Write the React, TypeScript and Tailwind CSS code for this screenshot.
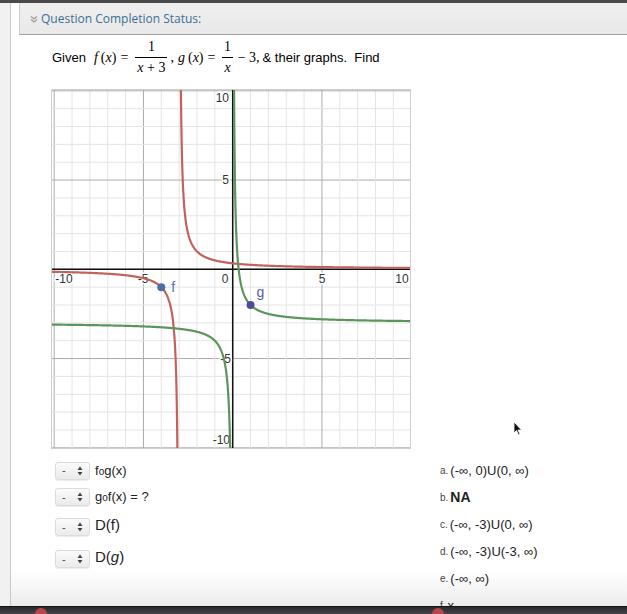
import React from 'react'

const S = 17.85
const CX = 180.7
const CY = 179.3
const px = (x: number) => CX + x * S
const py = (y: number) => CY - y * S

function curve(fn: (x: number) => number, a: number, b: number) {
  const pts: string[] = []
  const n = 1500
  for (let i = 0; i <= n; i++) {
    const x = a + ((b - a) * i) / n
    let y = fn(x)
    if (y > 12) y = 12
    if (y < -12) y = -12
    pts.push(`${px(x).toFixed(2)},${py(y).toFixed(2)}`)
  }
  return 'M' + pts.join('L')
}

function Graph() {
  const ticks: number[] = []
  for (let i = -10; i <= 10; i++) ticks.push(i)
  const f = (x: number) => 1 / (x + 3)
  const g = (x: number) => 1 / x - 3
  return (
    <svg width="360" height="360" className="block border border-[#cfcfcf] bg-white">
      <defs>
        <clipPath id="box">
          <rect x="0" y="0" width="360" height="360" />
        </clipPath>
      </defs>
      {ticks.map((i) => (
        <g key={i}>
          <line x1={px(i)} x2={px(i)} y1="0" y2="360" stroke={i % 5 === 0 ? '#ababab' : '#e4e4e4'} strokeWidth="1" />
          <line y1={py(i)} y2={py(i)} x1="0" x2="360" stroke={i % 5 === 0 ? '#ababab' : '#e4e4e4'} strokeWidth="1" />
        </g>
      ))}
      <line x1={px(0)} x2={px(0)} y1="0" y2="360" stroke="#111" strokeWidth="1.5" />
      <line y1={py(0)} y2={py(0)} x1="0" x2="360" stroke="#111" strokeWidth="1.5" />
      <g
        fontFamily="'Liberation Sans', Arial, sans-serif"
        fontSize="12"
        fill="#333"
        stroke="#fff"
        strokeWidth="3"
        paintOrder="stroke"
      >
        <text x="12" y="193" textAnchor="middle">-10</text>
        <text x="91" y="193" textAnchor="middle">-5</text>
        <text x="173" y="193" textAnchor="middle">0</text>
        <text x="270" y="193" textAnchor="middle">5</text>
        <text x="350" y="193" textAnchor="middle">10</text>
        <text x="177" y="12" textAnchor="end">10</text>
        <text x="177" y="94" textAnchor="end">5</text>
        <text x="179" y="273" textAnchor="end">-5</text>
        <text x="178" y="354" textAnchor="end">-10</text>
      </g>
      <g clipPath="url(#box)" fill="none" strokeWidth="2.2" strokeLinejoin="round">
        <path d={curve(f, -10.3, -3.0005)} stroke="#c0635c" />
        <path d={curve(f, -2.9995, 10.3)} stroke="#c0635c" />
        <path d={curve(g, -10.3, -0.0005)} stroke="#5b955c" />
        <path d={curve(g, 0.0005, 10.3)} stroke="#5b955c" />
      </g>
      <circle cx={px(-4)} cy={py(-1)} r="4" fill="#4d6fa6" />
      <circle cx={px(1)} cy={py(-2)} r="4" fill="#4c4b97" />
      <text x={px(-4) + 10} y={py(-1) + 5} fontSize="14" fill="#5a70a8" fontFamily="'Liberation Sans', Arial, sans-serif">f</text>
      <text x={px(1) + 6} y={py(-2) - 8} fontSize="14" fill="#5b5ba0" fontFamily="'Liberation Sans', Arial, sans-serif">g</text>
    </svg>
  )
}

function Frac({ top, bottom }: { top: React.ReactNode; bottom: React.ReactNode }) {
  return (
    <span className="inline-flex flex-col items-center mx-[3px] leading-[20px]">
      <span className="px-[1px]">{top}</span>
      <span className="border-t border-black px-[2px] leading-[20px]">{bottom}</span>
    </span>
  )
}

function Select() {
  return (
    <div className="w-[35px] h-[18px] rounded-[3px] border border-[#dcdcdc] bg-gradient-to-b from-[#fbfbfb] to-[#ebebeb] shadow-[0_1px_1px_rgba(0,0,0,0.08)] flex items-center justify-between px-[6px] text-[11px] text-[#444]">
      <span>-</span>
      <svg width="6" height="10" viewBox="0 0 6 10">
        <path d="M3 0.5 L5.5 4 L0.5 4 Z M3 9.5 L5.5 6 L0.5 6 Z" fill="#444" />
      </svg>
    </div>
  )
}

const sans = "font-['Liberation_Sans',Arial,sans-serif]"

export default function App() {
  const rows: [React.ReactNode, string][] = [
    [<span className="text-[13px]">f<span className="text-[10px]">o</span>g(x)</span>, 'h-[17px]'],
    [<span className="text-[13px]">g<span className="text-[10px]">o</span>f(x) = ?</span>, 'h-[27px]'],
    [<span className="text-[15px]">D(f)</span>, 'h-[30px]'],
    [<span className="text-[15px]">D(<i>g</i>)</span>, 'h-[32px]'],
  ]
  const answers: [string, React.ReactNode][] = [
    ['a.', '(-∞, 0)U(0, ∞)'],
    ['b.', <span className="font-bold text-[14px]">NA</span>],
    ['c.', '(-∞, -3)U(0, ∞)'],
    ['d.', '(-∞, -3)U(-3, ∞)'],
    ['e.', '(-∞, ∞)'],
    ['f.', 'x'],
  ]
  return (
    <div className={`relative w-[627px] h-[614px] overflow-hidden bg-white ${sans} text-[#1a1a1a]`}>
      <div className="h-[3px] bg-[#4a4a4a]" />
      <div className="flex h-[603px]">
        <div className="w-[11px] bg-[#f1f1f1] border-r border-[#c8c8c8]" />
        <div className="flex-1 pl-[8px] bg-gradient-to-b from-white from-[94%] to-[#ececec]">
          <div className="h-[32px] bg-gradient-to-b from-[#efefef] to-[#e9e9e9] border-l border-b border-l-[#cccccc] border-b-[#9f9f9f] flex items-center pl-[10px] font-['Open_Sans',sans-serif] text-[12px] text-[#3a6f95]">
            <svg width="8" height="8" viewBox="0 0 8 8" className="mr-[3px] mt-[1px]">
              <path d="M1 1.5 L4 4 L7 1.5 M1 4.5 L4 7 L7 4.5" stroke="#9a9a9a" strokeWidth="1.2" fill="none" />
            </svg>
            Question Completion Status:
          </div>
          <div className="pl-[33px] h-[54px] flex items-center text-[13px] text-black pb-[9px]">
            <span className="mr-[8px]">Given</span>
            <span className="font-['Liberation_Serif',serif] text-[14px] inline-flex items-center">
              <i>f</i>
              <span className="ml-[3px]">(<i>x</i>)</span>
              <span className="mx-[4px]">=</span>
              <Frac top="1" bottom={<span><i>x</i> + 3</span>} />
              <span>,</span>
              <i className="ml-[4px]">g</i>
              <span className="ml-[3px]">(<i>x</i>)</span>
              <span className="mx-[4px]">=</span>
              <Frac top="1" bottom={<i>x</i>} />
              <span className="ml-[2px]">− 3,</span>
            </span>
            <span className="ml-[3px]">&amp; their graphs.&nbsp; Find</span>
          </div>
          <div className="pl-[32px]">
            <Graph />
          </div>
          <div className="flex mt-[13px]">
            <div className="pl-[36px] w-[421px] flex flex-col">
              {rows.map(([label, h], i) => (
                <div key={i} className={`flex gap-[5px] ${h} ${i === 0 ? 'items-center' : 'items-end'} text-[#222]`}>
                  <Select />
                  {label}
                </div>
              ))}
            </div>
            <div className="flex flex-col text-[13px] text-[#222] mt-[-5px]">
              {answers.map(([k, v], i) => (
                <div key={i} className="flex items-center h-[27px] gap-[2px]">
                  <span className="text-[10px] text-[#444]">{k}</span>
                  <span>{v}</span>
                </div>
              ))}
            </div>
          </div>
        </div>
      </div>
      <div className="absolute left-0 right-0 bottom-0 h-[8px] bg-gradient-to-b from-[#2a2a2d] to-[#45454a] border-t border-[#151515] overflow-hidden">
        <div className="absolute left-[35px] top-[1px] w-[12px] h-[10px] rounded-t-full bg-[#b9474a]" />
        <div className="absolute left-[432px] top-[1px] w-[12px] h-[10px] rounded-t-full bg-[#b9474a]" />
      </div>
      <svg className="absolute left-[513px] top-[421px]" width="10" height="15" viewBox="0 0 10 15">
        <path d="M1 1 L1 12 L3.5 9.5 L5.5 14 L7 13.3 L5 9 L8.5 9 Z" fill="#111" stroke="#fff" strokeWidth="0.8" />
      </svg>
    </div>
  )
}
